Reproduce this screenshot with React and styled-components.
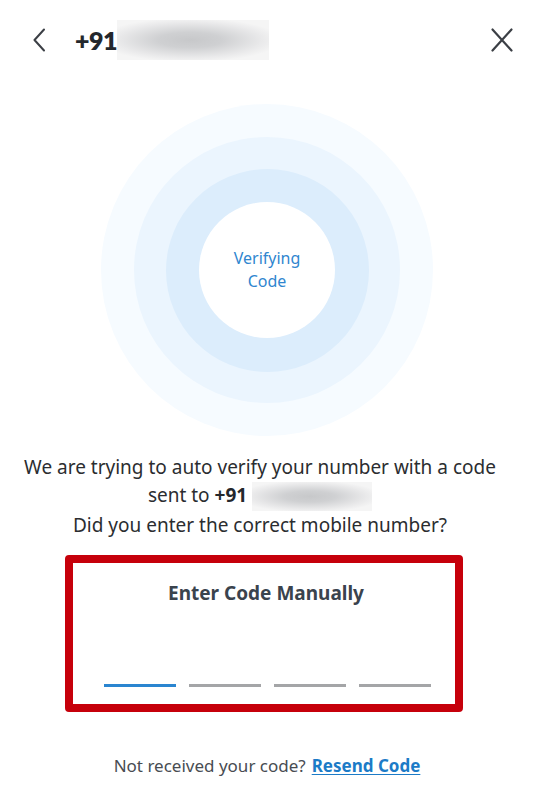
import React from "react";
import styled, { createGlobalStyle } from "styled-components";

const Global = createGlobalStyle`
  html, body { margin: 0; padding: 0; background: #ffffff; }
  body { font-family: "Noto Sans", "Lato", sans-serif; -webkit-font-smoothing: antialiased; }
  * { box-sizing: border-box; }
`;

const Page = styled.div`
  width: 540px;
  height: 804px;
  background: #fff;
  display: flex;
  flex-direction: column;
  align-items: center;
`;

const Header = styled.header`
  width: 100%;
  height: 80px;
  display: flex;
  align-items: center;
  padding: 0 27px 0 33px;
`;

const IconButton = styled.button`
  border: 0;
  background: none;
  padding: 0;
  display: flex;
  align-items: center;
  justify-content: center;
  width: ${(p) => p.$w}px;
  height: 40px;
  color: #3b3f45;
  cursor: pointer;
`;

const Phone = styled.div`
  display: flex;
  align-items: center;
  margin-left: 30px;
  flex: 1;
`;

const Code = styled.span`
  font-family: "Lato", sans-serif;
  font-weight: 800;
  font-size: 25px;
  color: #23272c;
  letter-spacing: -0.5px;
`;

const Redacted = styled.span`
  display: inline-block;
  width: ${(p) => p.$w}px;
  height: ${(p) => p.$h}px;
  background: radial-gradient(ellipse 60% 55% at 48% 50%, #c7c8ca 0%, #cfd0d2 35%, #eaeaeb 80%, #f5f5f5 100%);
  vertical-align: middle;
`;

const RadarWrap = styled.div`
  margin-top: 24px;
  margin-right: 6px;
`;

const Ring = styled.div`
  width: ${(p) => p.$size}px;
  height: ${(p) => p.$size}px;
  border-radius: 50%;
  background: ${(p) => p.$bg};
  display: flex;
  align-items: center;
  justify-content: center;
`;

const RingLabel = styled.div`
  color: #2f86cf;
  font-size: 16px;
  line-height: 23px;
  text-align: center;
`;

const Message = styled.p`
  margin: 17px 20px 0 0;
  width: 520px;
  text-align: center;
  font-size: 19px;
  line-height: 28px;
  color: #2b2d30;
`;

const Strong = styled.b`
  font-weight: 700;
  color: #23272c;
`;

const ManualBox = styled.section`
  margin-top: 16px;
  margin-right: 12px;
  width: 398px;
  height: 157px;
  border: 8px solid #c6000b;
  border-radius: 4px;
  display: flex;
  flex-direction: column;
  align-items: center;
  padding-top: 17px;
`;

const ManualTitle = styled.h2`
  margin: 0 0 0 4px;
  font-size: 19px;
  font-weight: 700;
  color: #3a434d;
  line-height: 26px;
`;

const Slots = styled.div`
  margin-top: 78px;
  display: flex;
  gap: 13px;
  margin-left: 6px;
`;

const Slot = styled.div`
  width: 72px;
  height: 3px;
  background: ${(p) => (p.$active ? "#2a85d0" : "#a4a5a7")};
`;

const Footer = styled.p`
  margin: 42px 6px 0 0;
  font-size: 17px;
  color: #484c52;
`;

const Link = styled.a`
  color: #1c7bc7;
  font-weight: 700;
  text-decoration: underline;
  text-underline-offset: 2px;
  margin-left: 6px;
`;

export default function App() {
  return (
    <Page>
      <Global />
      <Header>
        <IconButton $w={12} aria-label="Back">
          <svg width="12" height="24" viewBox="0 0 12 24" fill="none">
            <path d="M11 1.5 L1.5 12 L11 22.5" stroke="currentColor" strokeWidth="2" strokeLinecap="round" strokeLinejoin="round" />
          </svg>
        </IconButton>
        <Phone>
          <Code>+91</Code>
          <Redacted $w={152} $h={40} />
        </Phone>
        <IconButton $w={22} aria-label="Close">
          <svg width="22" height="24" viewBox="0 0 22 24" fill="none">
            <path d="M1.5 1.5 L20.5 22.5 M20.5 1.5 L1.5 22.5" stroke="currentColor" strokeWidth="2.2" strokeLinecap="round" />
          </svg>
        </IconButton>
      </Header>

      <RadarWrap>
        <Ring $size={332} $bg="#f6fbff">
          <Ring $size={266} $bg="#ebf5fe">
            <Ring $size={203} $bg="#dcedfc">
              <Ring $size={136} $bg="#ffffff">
                <RingLabel>
                  Verifying
                  <br />
                  Code
                </RingLabel>
              </Ring>
            </Ring>
          </Ring>
        </Ring>
      </RadarWrap>

      <Message>
        We are trying to auto verify your number with a code
        <br />
        sent to <Strong>+91</Strong> <Redacted $w={120} $h={29} />
        <br />
        Did you enter the correct mobile number?
      </Message>

      <ManualBox>
        <ManualTitle>Enter Code Manually</ManualTitle>
        <Slots>
          <Slot $active />
          <Slot />
          <Slot />
          <Slot />
        </Slots>
      </ManualBox>

      <Footer>
        Not received your code?<Link href="#">Resend Code</Link>
      </Footer>
    </Page>
  );
}
